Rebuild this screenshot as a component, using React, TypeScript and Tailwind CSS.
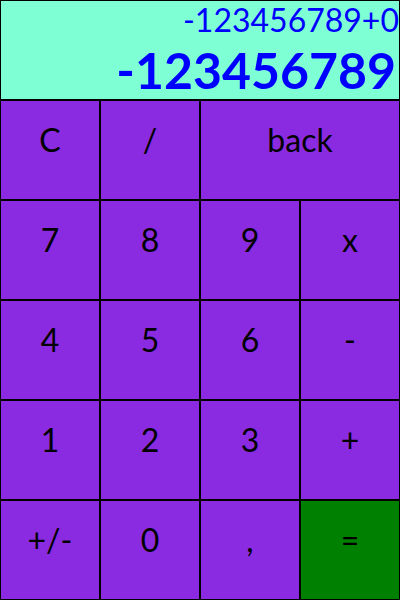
import React from "react";

const rows: { label: string; span?: boolean; green?: boolean }[] = [
  { label: "C" },
  { label: "/" },
  { label: "back", span: true },
  { label: "7" },
  { label: "8" },
  { label: "9" },
  { label: "x" },
  { label: "4" },
  { label: "5" },
  { label: "6" },
  { label: "-" },
  { label: "1" },
  { label: "2" },
  { label: "3" },
  { label: "+" },
  { label: "+/-" },
  { label: "0" },
  { label: "," },
  { label: "=", green: true },
];

export default function App() {
  return (
    <div className="w-[400px] font-['Lato','Liberation_Sans',sans-serif]">
      <div className="h-[100px] border border-black bg-[#7fffd4] text-[#0000ff] flex flex-col items-end pt-[3px] pr-0">
        <div className="text-[32px] font-normal leading-none">-123456789+0</div>
        <div className="text-[50px] font-bold leading-none mt-[9px] pr-[3px]">-123456789</div>
      </div>
      <div className="grid grid-cols-4">
        {rows.map((b, i) => (
          <button
            key={i}
            className={`h-[100px] border border-black flex items-center justify-center pb-[21px] text-[32px] leading-none text-black ${
              b.span ? "col-span-2" : ""
            } ${b.green ? "bg-[#008000]" : "bg-[#8a2be2]"}`}
          >
            {b.label}
          </button>
        ))}
      </div>
    </div>
  );
}
